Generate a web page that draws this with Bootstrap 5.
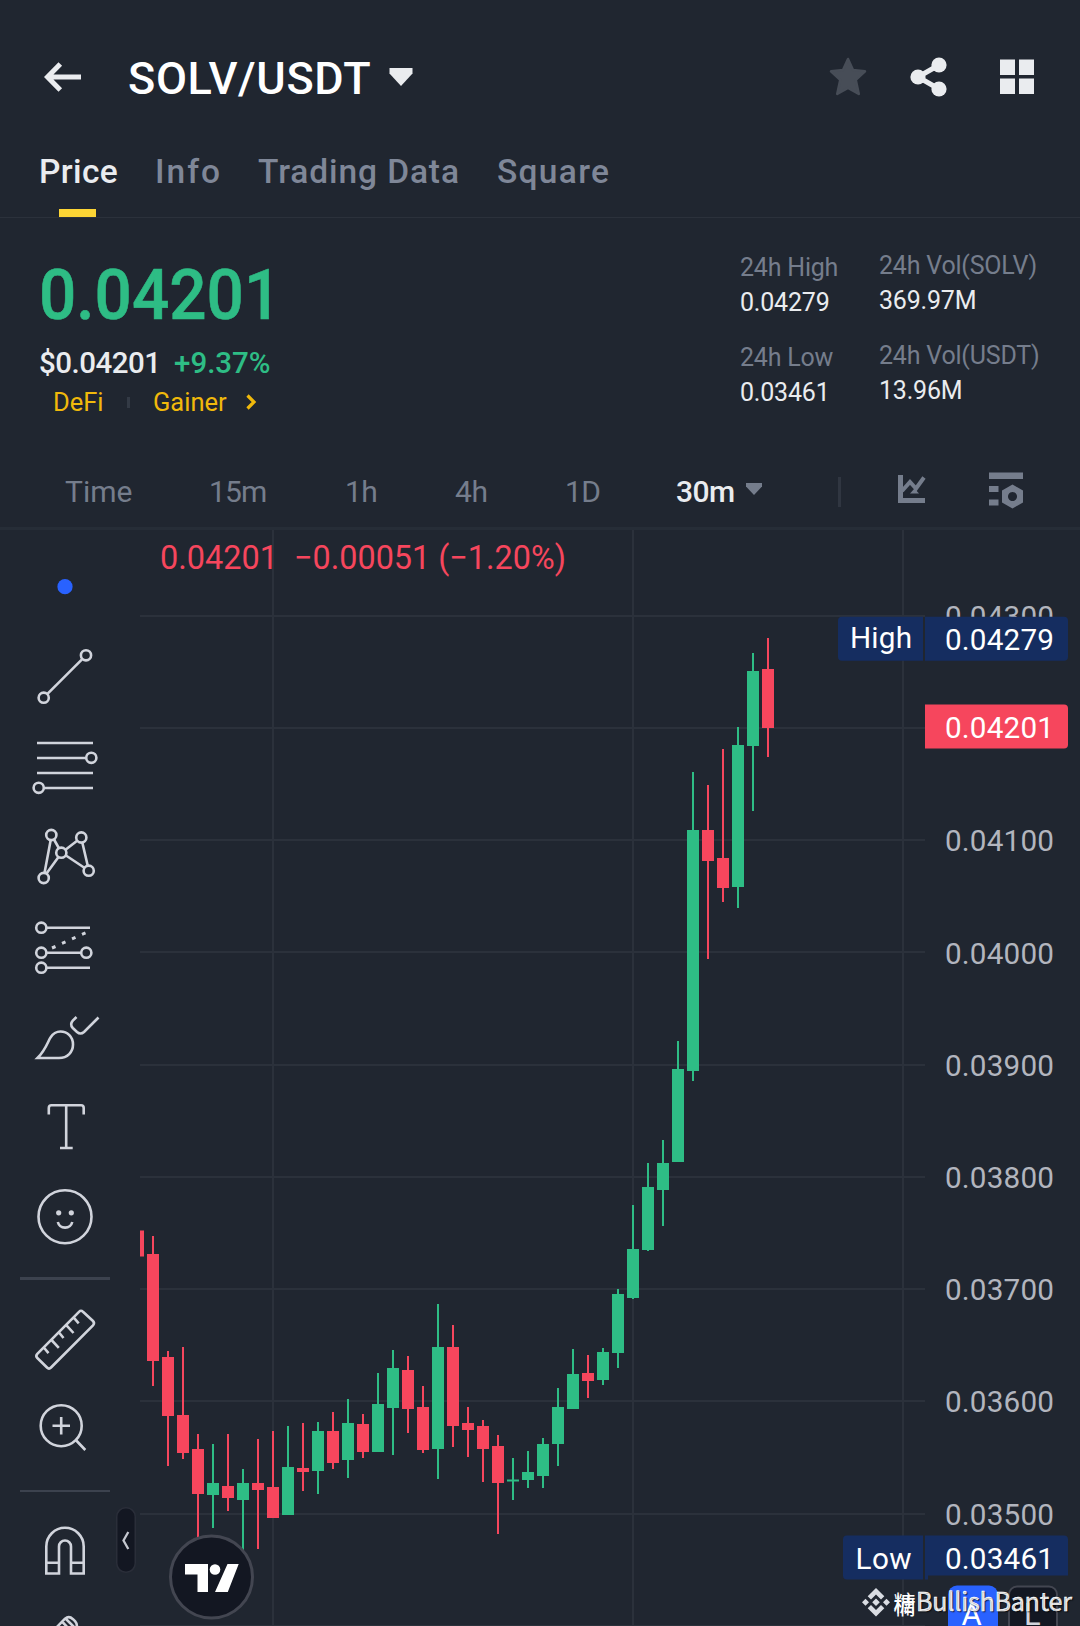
<!DOCTYPE html>
<html lang="en" data-bs-theme="dark">
<head>
<meta charset="utf-8">
<meta name="viewport" content="width=device-width, initial-scale=1">
<title>SOLV/USDT</title>
<link href="https://cdn.jsdelivr.net/npm/bootstrap@5.3.0/dist/css/bootstrap.min.css" rel="stylesheet">
<style>
body{background:#202630;color:#eaecef;font-family:Roboto,"Liberation Sans",sans-serif;width:1080px;height:1626px;overflow:hidden}
svg{display:block;flex:none}
.app-head{height:154px;padding:0 46px 0 44px}
.pair{font-size:45px;font-weight:500;line-height:60px;color:#fff;margin:3px 0 0 47px;width:261px;letter-spacing:.65px;white-space:nowrap}
.share-icon{margin-left:43px}
.grid-icon{margin-left:52px}
.tabs-row{height:64px;padding-left:39px;border-bottom:1px solid #2b313b}
.tabs-row .nav-link{padding:0;font-size:33.5px;font-weight:500;line-height:36px;color:#7f8798;position:relative;height:63px;white-space:nowrap}
.tabs-row .nav-link.active{color:#eaecef}
.tabs-row .nav-link.active::after{content:"";position:absolute;left:20px;bottom:0;width:37px;height:8px;background:#fcd535}
.t1{width:116px;letter-spacing:.4px}.t2{width:103px;letter-spacing:2px}.t3{width:239px;letter-spacing:.9px}.t4{letter-spacing:1.3px}
.summary{height:238px;padding-left:39px}
.last{font-size:71px;font-weight:500;line-height:80px;color:#2ebd85;margin-top:37px;transform:scaleX(.925);transform-origin:0 50%;width:260px;-webkit-text-stroke:.6px #2ebd85}
.fiat{font-size:29.5px;font-weight:500;line-height:40px;margin-top:8px;white-space:nowrap}
.up{color:#2ebd85}
.tagline{font-size:25.5px;line-height:38px;color:#f0b90b;padding-left:14px}
.stat{font-size:25px;line-height:35px;white-space:nowrap;height:90px;letter-spacing:-.2px}
.stat dt{font-weight:400;color:#757d8c}.stat dd{margin:0;color:#eaecef}
.stats-a{width:139px;margin-top:32px}.stats-b{width:200px;margin-top:30px}
.frames{height:74px;border-bottom:3px solid #262d37;font-size:30px;color:#757d8c;padding-left:65px}
.frames span{white-space:nowrap}
.f1{width:144px}.f2{width:136px;letter-spacing:-.9px}.f3{width:110px;letter-spacing:-.7px}.f4{width:110px;letter-spacing:-.3px}.f5{width:111px;letter-spacing:-.5px}
.f6{width:70px;font-weight:500;color:#eaecef;letter-spacing:-.6px}
.vr-mid{width:3px;height:30px;background:#303641;margin-left:76px}
.board{height:1096px}
.tools{width:140px;padding-top:12px}
.tools svg{fill:none;stroke:#d1d4dc;stroke-width:2.6}
.rule{width:90px;margin-left:20px;background:#3c424e}
.rule-a{height:3px;margin-top:15px;margin-bottom:15px}
.rule-b{height:2px;margin-top:15px;margin-bottom:14px}
.grip{position:absolute;left:116px;top:1507px}
</style>
</head>
<body>
<header class="app-head d-flex align-items-center">
  <svg width="37" height="30" viewBox="0 0 37 30" fill="none" stroke="#eaecef" stroke-width="5"><path d="M37 15H4M16.300 2L3.500 15l12.800 13"/></svg>
  <h1 class="pair">SOLV/USDT</h1>
  <svg width="24" height="20" viewBox="0 0 24 20"><path d="M.5 1H23.500V6.500L12 19 .5 6.500z" fill="#eaecef"/></svg>
  <div class="d-flex align-items-center ms-auto">
    <svg width="38" height="40" viewBox="0 0 38 40"><path d="M19 2l5 11 12 1.300-9.200 8.600L29.800 37 19 30.800 8.200 37l3-14.100L2 14.300 14 13z" fill="#474d57" stroke="#474d57" stroke-width="2.500" stroke-linejoin="round"/></svg>
    <svg class="share-icon" width="38" height="40" viewBox="0 0 38 40"><path d="M29 8L8 20l21 12" fill="none" stroke="#eaecef" stroke-width="5"/><g fill="#eaecef"><circle cx="29" cy="8" r="7.600"/><circle cx="8" cy="20" r="7.600"/><circle cx="29" cy="32" r="7.600"/></g></svg>
    <svg class="grid-icon" width="34" height="36" viewBox="0 0 34 36" fill="#eaecef"><path d="M0 .5h15v15.500H0zM19 .5h15v15.500H19zM0 19.500h15V35H0zM19 19.500h15V35H19z"/></svg>
  </div>
</header>

<nav class="tabs-row nav flex-nowrap">
  <div class="t1"><a class="nav-link active d-inline-block">Price</a></div>
  <div class="t2"><a class="nav-link d-inline-block">Info</a></div>
  <div class="t3"><a class="nav-link d-inline-block">Trading Data</a></div>
  <div class="t4"><a class="nav-link d-inline-block">Square</a></div>
</nav>

<section class="summary d-flex">
  <div style="width:701px">
    <div class="last">0.04201</div>
    <div class="fiat d-flex"><span style="width:135px;letter-spacing:-.5px">$0.04201</span><span class="up">+9.37%</span></div>
    <div class="tagline d-flex align-items-center"><span style="width:74px">DeFi</span><svg width="3" height="11"><rect width="3" height="11" fill="#333a45"/></svg><span style="width:93px;margin-left:23px">Gainer</span><svg width="11" height="16" viewBox="0 0 11 16" fill="none" stroke="#f0b90b" stroke-width="3.200"><path d="M1.500 1.500L8 8l-6.500 6.500"/></svg></div>
  </div>
  <div class="stats-a">
    <dl class="stat m-0"><dt>24h High</dt><dd>0.04279</dd></dl>
    <dl class="stat m-0"><dt>24h Low</dt><dd>0.03461</dd></dl>
  </div>
  <div class="stats-b">
    <dl class="stat m-0"><dt>24h Vol(SOLV)</dt><dd>369.97M</dd></dl>
    <dl class="stat m-0"><dt>24h Vol(USDT)</dt><dd>13.96M</dd></dl>
  </div>
</section>

<div class="frames d-flex align-items-center">
  <span class="f1">Time</span><span class="f2">15m</span><span class="f3">1h</span><span class="f4">4h</span><span class="f5">1D</span><span class="f6">30m</span>
  <svg width="16" height="12" viewBox="0 0 16 12" style="margin-top:-5px"><path d="M0 0h16v3.500L8 12 0 3.500z" fill="#757d8c"/></svg>
  <div class="vr-mid"></div>
  <svg width="28" height="28" viewBox="0 0 28 28" style="margin:-5px 0 0 57px" fill="none" stroke="#757d8c"><path d="M2.500 0v25.500H27" stroke-width="5"/><path d="M4 16l8-9 6 6.500L26 2.500" stroke-width="4"/><path d="M16.500 13.500l4.500 5h-9z" fill="#757d8c" stroke="none"/></svg>
  <svg width="34" height="37" viewBox="0 0 34 37" style="margin:-3px 0 0 63px" fill="#757d8c"><path d="M0 .5h34V7H0zM0 14h9.500v6H0zM0 27.500h9.500v6H0z"/><path fill-rule="evenodd" d="M23.500 12.500L34 18.500v12L23.500 36.500 13 30.500v-12zM23.500 20a4.500 4.500 0 1 0 .01 0z"/></svg>
</div>

<main class="board d-flex">
  <aside class="tools d-flex flex-column">
    <svg width="130" height="90" viewBox="0 542 130 90"><circle cx="65" cy="586.700" r="7.600" fill="#2962ff" stroke="none"/></svg>
    <svg width="130" height="90" viewBox="0 632 130 90"><circle cx="86" cy="655.300" r="5.100"/><circle cx="43.700" cy="697.700" r="5.100"/><path d="M82 659.300L47.700 693.700"/></svg>
    <svg width="130" height="90" viewBox="0 722 130 90"><path d="M37 743H93M37 758H86M37 773H93M44 788H93"/><circle cx="91.300" cy="757.800" r="5.100"/><circle cx="38.700" cy="787.800" r="5.100"/></svg>
    <svg width="130" height="90" viewBox="0 812 130 90"><path d="M50.700 840L44.500 873M54 839.500l4.800 8.500M65.800 849.500l11-8.500M58.500 857L46.500 873.500M66 855.500l18 12M82.300 842.500l5.400 23"/><circle cx="51.300" cy="835" r="5.100"/><circle cx="81.300" cy="837.500" r="5.100"/><circle cx="61.300" cy="852.700" r="5.100"/><circle cx="43.700" cy="878" r="5.100"/><circle cx="88.700" cy="870.700" r="5.100"/></svg>
    <svg width="130" height="90" viewBox="0 902 130 90"><path d="M46.500 927.800H90M46.500 952.700H81M46.500 967.800H90"/><circle cx="41.300" cy="927.700" r="5.100"/><circle cx="41.300" cy="952.700" r="5.100"/><circle cx="86.300" cy="952.700" r="5.100"/><circle cx="41.300" cy="967.700" r="5.100"/><path d="M52 948l3.500-1.500M62 943.300l3.500-1.500M72 938.800l3.500-1.500M82 934.300l3.500-1.500" stroke-width="3"/></svg>
    <svg width="130" height="90" viewBox="0 992 130 90"><path d="M37.500 1058C46 1049.500 48 1041 50.500 1037.500C53 1033.500 57 1031.500 60.500 1031.500C67.500 1031.500 73 1037 73 1044.500C73 1052 67.500 1058 59 1058Z"/><path d="M76.500 1017L72.800 1020.700Q69.500 1024.500 72.800 1028L77 1032Q80.500 1035 84 1032L98.500 1017.500"/></svg>
    <svg width="130" height="90" viewBox="0 1082 130 90"><path d="M48.800 1114.500V1108Q48.800 1105.300 51.500 1105.300H81Q83.700 1105.300 83.700 1108V1114.500M66.200 1105.300V1148M60 1148H72.700"/></svg>
    <svg width="130" height="90" viewBox="0 1172 130 90"><circle cx="65" cy="1216.700" r="26.500"/><g fill="#d1d4dc" stroke="none"><circle cx="58.700" cy="1212.800" r="2.600"/><circle cx="71.300" cy="1212.800" r="2.600"/></g><path d="M57.800 1222A7.500 7.500 0 0 0 72.300 1222"/></svg>
    <div class="rule rule-a"></div>
    <svg width="130" height="90" viewBox="0 1295 130 90"><path d="M79 1311.800Q81 1309.800 83 1311.800L93 1321Q95 1323 93 1325.300L51 1367.500Q49 1369.500 47 1367.500L37.300 1358Q35.300 1356 37.300 1353.800ZM43.800 1347.500l4.700 5.700M51.500 1340l7.300 7.800M59 1332.500l4.500 5.500M66.500 1325.300l7 7.700M74 1317.800l4.700 5.500"/></svg>
    <svg width="130" height="90" viewBox="0 1385 130 90"><circle cx="61.200" cy="1425.700" r="20.500"/><path d="M52.500 1425.800H70M61.200 1417V1434.500M75.800 1440L85.300 1450"/></svg>
    <div class="rule rule-b"></div>
    <svg width="130" height="90" viewBox="0 1506 130 90"><path d="M46.300 1573.500V1546.500a18.700 18.700 0 0 1 37.400 0V1573.500H71V1546.500a6 6 0 0 0-12 0V1573.500ZM46.300 1562.700H59M71 1562.700H83.700"/></svg>
    <svg width="130" height="30" viewBox="0 1596 130 30"><path d="M55 1629L65 1618.700Q69 1615.500 73 1619.200L75 1621.200Q77.500 1624 76.800 1628M62 1621.500L69 1629M65.500 1618.500L74 1627"/></svg>
  </aside>

  <svg id="chart" width="940" height="1096" viewBox="140 530 940 1096" font-family="Roboto,'Liberation Sans',sans-serif">
    <g id="grid" stroke="#2b313b" stroke-width="2"></g>
    <g id="candles"></g>
    <g fill="#f6465d" font-size="32.500"><text x="160" y="568.500" textLength="118">0.04201</text><text x="294" y="568.500" textLength="272" lengthAdjust="spacingAndGlyphs">−0.00051 (−1.20%)</text></g>
    <g id="axis" fill="#b2b5be" font-size="29.700"></g>
    <g fill="#152d60"><path d="M842 616.700H923V660.700H842a4 4 0 0 1-4-4V620.700a4 4 0 0 1 4-4zM925 616.700H1064a4 4 0 0 1 4 4V656.700a4 4 0 0 1-4 4H925zM847 1535.500H923V1579.500H847a4 4 0 0 1-4-4V1539.500a4 4 0 0 1 4-4zM925 1535.500H1064a4 4 0 0 1 4 4V1575.500H928V1579.500H925z"/></g>
    <path d="M925 704.500H1064a4 4 0 0 1 4 4V744.500a4 4 0 0 1-4 4H925z" fill="#f6465d"/>
    <g fill="#fff" font-size="29.700">
      <text x="850" y="647.800" textLength="62">High</text><text x="945" y="649.700" textLength="109">0.04279</text>
      <text x="945" y="737.800" textLength="109">0.04201</text>
      <text x="855.500" y="1569" textLength="56">Low</text><text x="945" y="1569" textLength="109">0.03461</text>
    </g>
    <circle cx="211.500" cy="1577" r="41" fill="#131722" stroke="#434651" stroke-width="3"/>
    <g fill="#fff"><path d="M185 1564H208V1592H197.500V1574.500H185zM227.500 1564H238.700L227.800 1592H215z"/><circle cx="215" cy="1569.500" r="5.300"/></g>
    <rect x="948" y="1585.500" width="50" height="60" rx="9" fill="#2962ff"/>
    <rect x="1009" y="1586.500" width="48" height="60" rx="8" fill="#131722" stroke="#434651" stroke-width="2"/>
    <g font-size="31" fill="#fff"><text x="961.500" y="1625">A</text><text x="1024" y="1625" fill="#d1d4dc">L</text></g>
    <g fill="#d9dce2"><path d="M876 1588l8.300 8.300-3.300 3.300-5-5-5 5-3.300-3.300zM876 1616.500l8.300-8.300-3.300-3.300-5 5-5-5-3.300 3.300zM876 1598.500l3.800 3.800-3.800 3.800-3.800-3.800zM865.500 1598.800l3.500 3.500-3.500 3.500-3.500-3.500zM886.500 1598.800l3.500 3.500-3.500 3.500-3.500-3.500z"/></g>
    <g fill="#fff" font-family="'Noto Sans CJK SC','Noto Sans',sans-serif">
      <text x="893.500" y="1611" font-size="22">糖</text><text x="893.500" y="1613.500" font-size="22">楠</text>
      <text x="916" y="1611" font-size="25" textLength="156" stroke="#fff" stroke-width=".5" style="text-shadow:1px 1px 1px rgba(0,0,0,.6)">BullishBanter</text>
    </g>
  </svg>
</main>

<svg class="grip" width="20" height="66" viewBox="0 0 20 66"><rect x=".75" y=".75" width="18.500" height="64.500" rx="9" fill="#131722" stroke="#2a2e39" stroke-width="1.500"/><path d="M12.300 25L7.500 33.500L12.300 42" fill="none" stroke="#c5c8d0" stroke-width="2.300"/></svg>

<script src="https://cdn.jsdelivr.net/npm/bootstrap@5.3.0/dist/js/bootstrap.bundle.min.js"></script>
<script>
// Each candle: direction, wick top, body top, body bottom, wick bottom; one every 15px from x=153.
const candles = [
 ['r',1236,1254,1361,1386],['r',1351,1357,1416,1466],['r',1347,1415,1453,1459],['r',1434,1449,1494,1545],
 ['g',1444,1483,1495,1528],['r',1434,1486,1498,1511],['g',1469,1483,1500,1560],['r',1439,1483,1490,1549],
 ['r',1431,1487,1518,1518],['g',1426,1467,1515,1515],['r',1423,1468,1472,1491],['g',1422,1431,1471,1494],
 ['r',1412,1431,1463,1469],['g',1399,1423,1460,1478],['r',1414,1424,1452,1458],['g',1373,1404,1452,1452],
 ['g',1350,1368,1408,1455],['r',1356,1370,1409,1433],['r',1386,1407,1450,1453],['g',1304,1347,1449,1479],
 ['r',1325,1347,1426,1447],['r',1407,1423,1430,1457],['r',1420,1426,1449,1482],['r',1435,1446,1483,1534],
 ['g',1458,1479.5,1481.5,1500],['g',1451,1472,1480,1488],['g',1438,1444,1476,1488],['g',1388,1407,1444,1466],
 ['g',1349,1374,1409,1409],['r',1355,1373,1381,1398],['g',1348,1352,1380,1385],['g',1289,1294,1353,1368],
 ['g',1205,1249,1298,1299],['g',1163,1187,1250,1251],['g',1140,1163,1190,1226],['g',1041,1069,1162,1162],
 ['g',772,830,1071,1081],['r',785,830,861,959],['r',749,858,888,902],['g',727,745,887,908],
 ['g',653,671,746,811],['r',638,669,728,757]
];
const color = {r:'#f6465d', g:'#2ebd85'};
let s = '<rect x="140" y="1230.500" width="4" height="26" fill="#f6465d"/>';
candles.forEach(([d,t,a,b,e],i)=>{const x=153+15*i;
  s+=`<rect x="${x-1}" y="${t}" width="2" height="${e-t}" fill="${color[d]}"/><rect x="${x-6}" y="${a}" width="12" height="${b-a}" fill="${color[d]}"/>`;});
document.getElementById('candles').innerHTML = s;
let g = '', ax = '';
for (let i=0;i<10;i++) g += `<path d="M140 ${Math.round(615.5+112.25*i)}H925"/>`;
[273,633,903].forEach(x=>g+=`<path d="M${x} 526V1626"/>`);
document.getElementById('grid').innerHTML = g;
for (let i=0;i<9;i++) if(i!==1) ax += `<text x="945" y="${(627+112.2*i).toFixed(1)}" textLength="109">0.0${4300-100*i}</text>`;
document.getElementById('axis').innerHTML = ax;
</script>
</body>
</html>
